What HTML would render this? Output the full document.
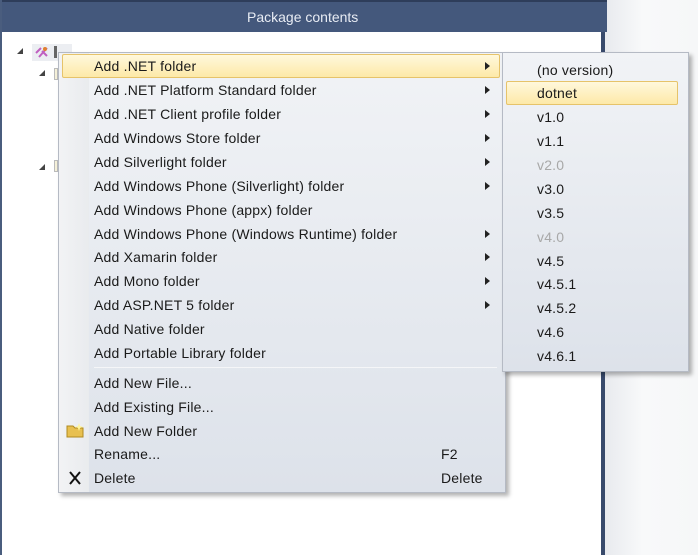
<!DOCTYPE html>
<html><head><style>
*{margin:0;padding:0;box-sizing:border-box}
body{width:698px;height:555px;overflow:hidden;background:#fff;font-family:"Liberation Sans",sans-serif;position:relative}
.right{position:absolute;left:605px;top:0;width:93px;height:555px;background:linear-gradient(90deg,#e8eaee,#f8f9fa 40%,#f6f7f8)}
.win{position:absolute;left:0;top:0;width:605px;height:555px;background:#fff;border-left:2px solid #4a5d7e;border-right:4px solid #384a6b}
.hdr{position:absolute;left:0;top:0;width:605px;height:32px;background:#44587c;border-top:2px solid #2e3d5a;color:#e8ecf4;font-size:14px;text-align:center;line-height:30px}
.hdr span{position:absolute;left:245px}
.tri{position:absolute;width:0;height:0;border-left:6px solid transparent;border-bottom:6px solid #444}
.menu{position:absolute;left:58px;top:52px;width:448px;height:441px;background:linear-gradient(180deg,#f1f3f6,#dde2ea);border:1px solid #b5bac4;box-shadow:3px 3px 4px rgba(0,0,0,.3)}
.menu .col{position:absolute;left:0;top:0;width:30px;height:100%;background:linear-gradient(90deg,#f2f3f5,#e9ebee)}
.it{position:absolute;left:35px;font-size:14px;letter-spacing:0.2px;color:#1a1a1a;height:24px;line-height:24px;width:400px}
.arr{position:absolute;left:426px;width:0;height:0;border-top:4px solid transparent;border-bottom:4px solid transparent;border-left:5px solid #222}
.hl{position:absolute;background:linear-gradient(180deg,#fff8dc,#fde9a8);border:1px solid #e6c36a;border-radius:2px}
.sub{position:absolute;left:502px;top:52px;width:187px;height:320px;background:linear-gradient(180deg,#f1f3f6,#dde2ea);border:1px solid #b5bac4;box-shadow:3px 3px 4px rgba(0,0,0,.3)}
.sit{position:absolute;left:34px;font-size:14px;letter-spacing:0.2px;color:#1a1a1a;height:24px;line-height:24px}
.dis{color:#a8a8a8}
.sep{position:absolute;left:35px;top:314px;width:403px;height:1px;background:#c8ccd3;border-bottom:1px solid #f5f6f8}
</style></head><body>
<div class="right"></div>
<div class="win">
<div class="hdr"><span>Package contents</span></div>
<div class="tri" style="left:15px;top:48px"></div>
<div class="tri" style="left:37px;top:70px"></div>
<div class="tri" style="left:37px;top:164px"></div>
<div style="position:absolute;left:30px;top:44px;width:40px;height:17px;background:#eceef2"></div>
<svg style="position:absolute;left:32px;top:45px" width="16" height="14"><path d="M2 8 L7 3 M5 12 L13 3 M8 6 L13 11" stroke="#c060c0" stroke-width="2" fill="none"/><circle cx="11" cy="4" r="2" fill="#e08030"/></svg>
<div style="position:absolute;left:52px;top:46px;width:3px;height:12px;background:#666"></div>
<div style="position:absolute;left:52px;top:68px;width:4px;height:12px;border:1px solid #bbb;background:#f5f0d8"></div>
<div style="position:absolute;left:52px;top:160px;width:4px;height:12px;border:1px solid #bbb;background:#f5f0d8"></div>
</div>
<div class="menu">
<div class="col"></div>
<div class="hl" style="left:3px;top:1px;width:438px;height:24px"></div>
<div class="it" style="top:1px">Add .NET folder</div><div class="arr" style="top:9px"></div>
<div class="it" style="top:25px">Add .NET Platform Standard folder</div><div class="arr" style="top:33px"></div>
<div class="it" style="top:49px">Add .NET Client profile folder</div><div class="arr" style="top:57px"></div>
<div class="it" style="top:73px">Add Windows Store folder</div><div class="arr" style="top:81px"></div>
<div class="it" style="top:97px">Add Silverlight folder</div><div class="arr" style="top:105px"></div>
<div class="it" style="top:121px">Add Windows Phone (Silverlight) folder</div><div class="arr" style="top:129px"></div>
<div class="it" style="top:145px">Add Windows Phone (appx) folder</div>
<div class="it" style="top:169px">Add Windows Phone (Windows Runtime) folder</div><div class="arr" style="top:177px"></div>
<div class="it" style="top:192px">Add Xamarin folder</div><div class="arr" style="top:200px"></div>
<div class="it" style="top:216px">Add Mono folder</div><div class="arr" style="top:224px"></div>
<div class="it" style="top:240px">Add ASP.NET 5 folder</div><div class="arr" style="top:248px"></div>
<div class="it" style="top:264px">Add Native folder</div>
<div class="it" style="top:288px">Add Portable Library folder</div>
<div class="sep"></div>
<div class="it" style="top:318px">Add New File...</div>
<div class="it" style="top:342px">Add Existing File...</div>
<div class="it" style="top:366px">Add New Folder</div>
<div class="it" style="top:389px">Rename...<span style="position:absolute;left:347px">F2</span></div>
<div class="it" style="top:413px">Delete<span style="position:absolute;left:347px">Delete</span></div>
<svg style="position:absolute;left:7px;top:369px" width="18" height="16"><path d="M1 4 h6 l2 2 h8 v9 h-16z" fill="#e8c050" stroke="#b08a20"/><path d="M13 1 l1 3 l3 1 l-3 1 l-1 3 l-1 -3 l-3 -1 l3 -1z" fill="#fff6a0"/></svg>
<svg style="position:absolute;left:9px;top:417px" width="14" height="16"><path d="M2 2 L12 14 M12 2 L2 14" stroke="#111" stroke-width="2"/></svg>
</div>
<div class="sub">
<div class="hl" style="left:3px;top:28px;width:172px;height:24px"></div>
<div class="sit" style="top:5px">(no version)</div>
<div class="sit" style="top:28px">dotnet</div>
<div class="sit" style="top:52px">v1.0</div>
<div class="sit" style="top:76px">v1.1</div>
<div class="sit dis" style="top:100px">v2.0</div>
<div class="sit" style="top:124px">v3.0</div>
<div class="sit" style="top:148px">v3.5</div>
<div class="sit dis" style="top:172px">v4.0</div>
<div class="sit" style="top:196px">v4.5</div>
<div class="sit" style="top:219px">v4.5.1</div>
<div class="sit" style="top:243px">v4.5.2</div>
<div class="sit" style="top:267px">v4.6</div>
<div class="sit" style="top:291px">v4.6.1</div>
</div>
</body></html>
